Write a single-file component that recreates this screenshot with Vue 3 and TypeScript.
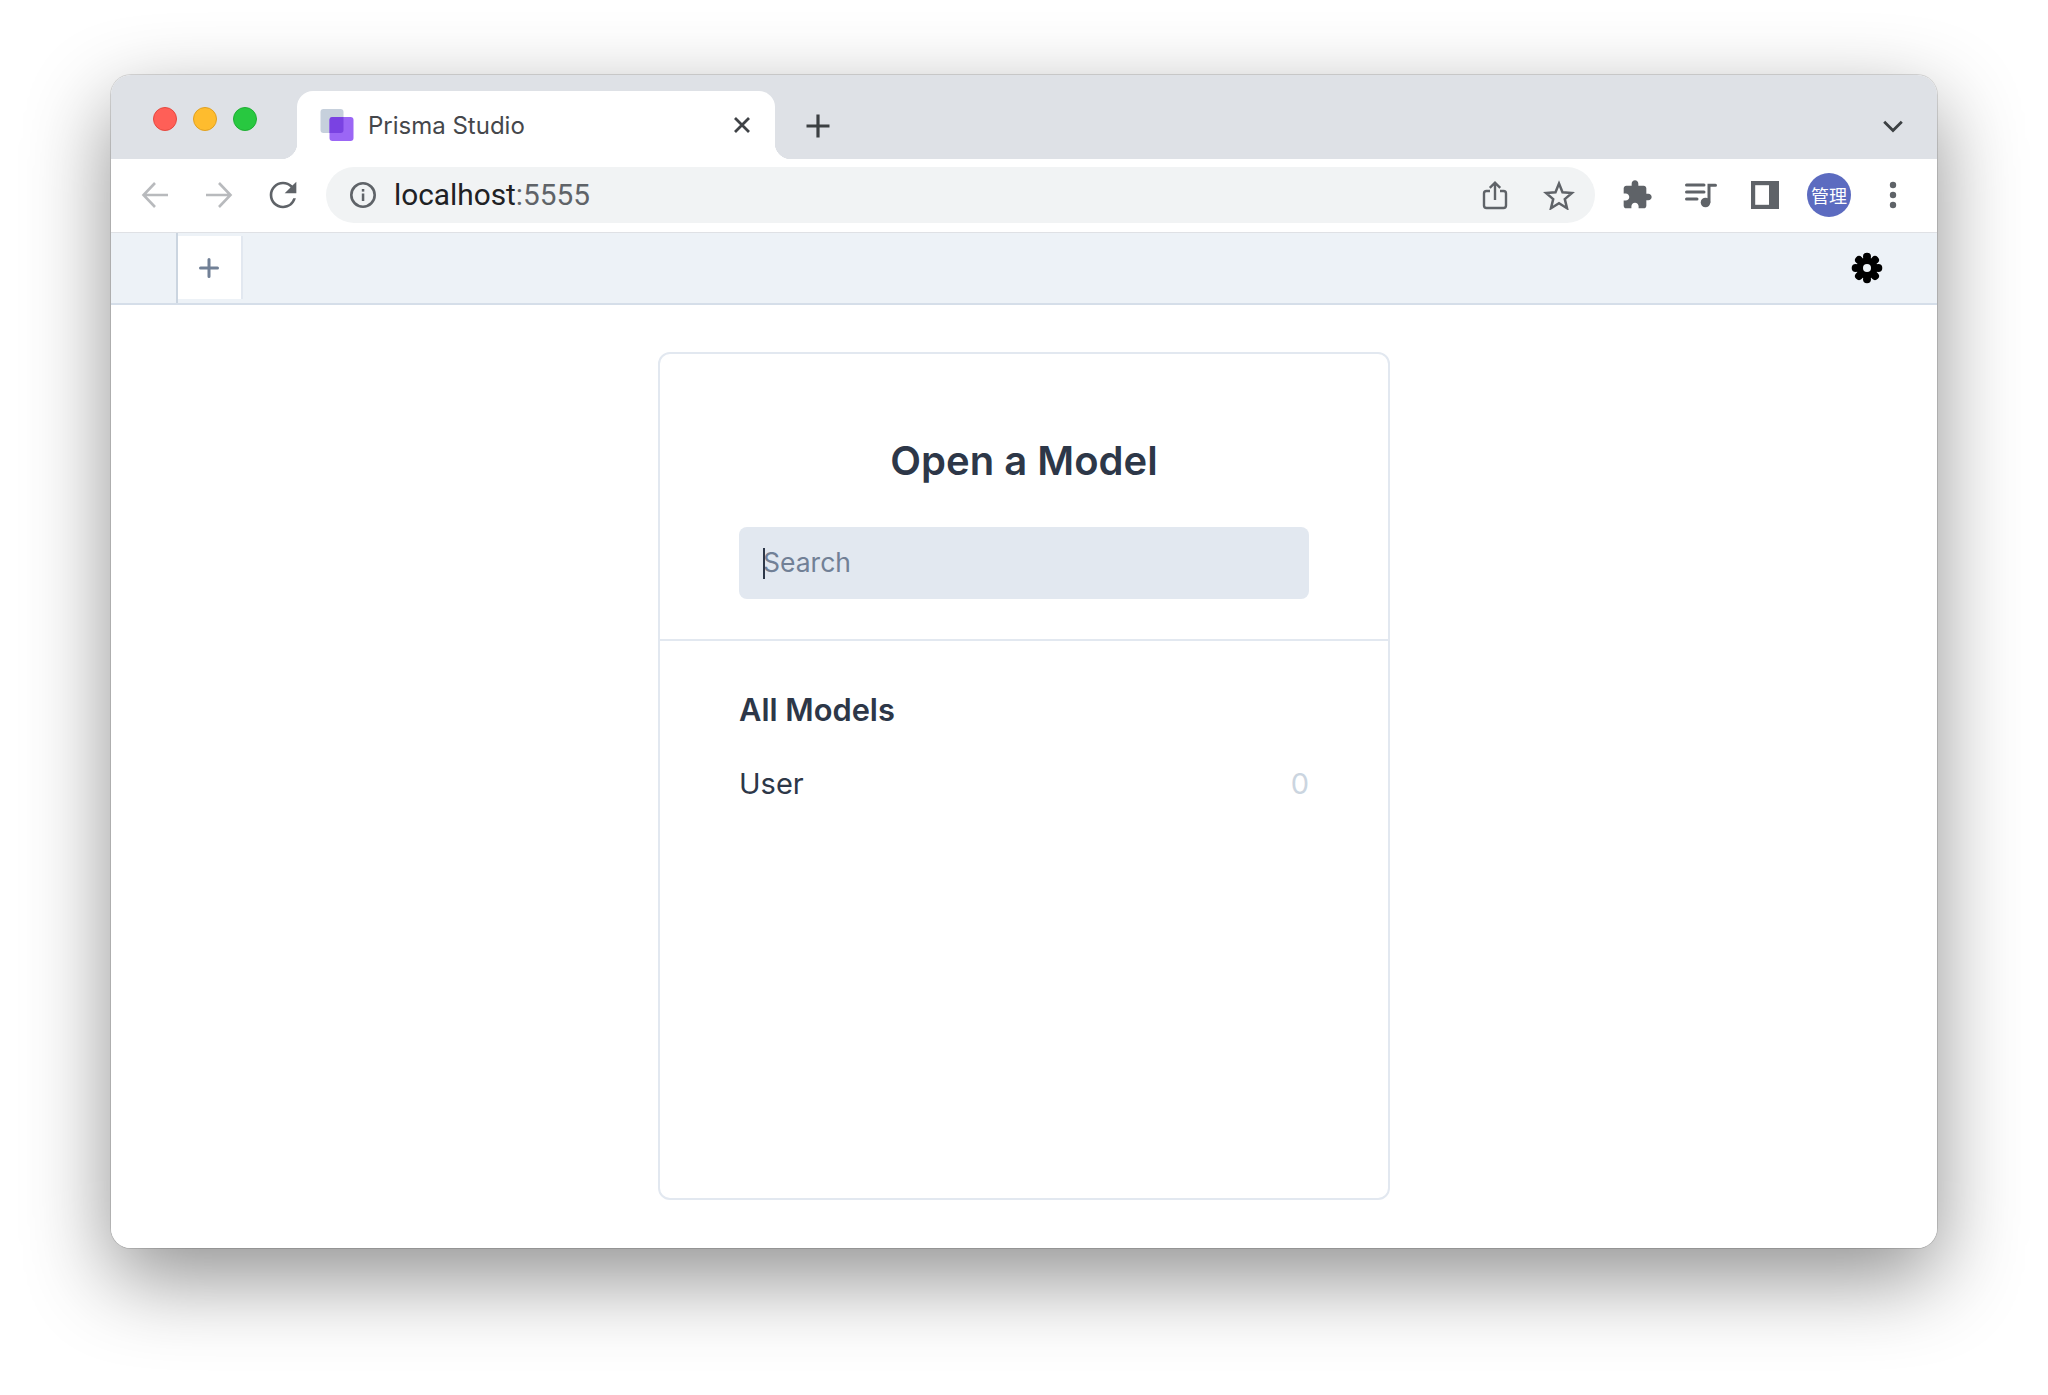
<script setup lang="ts">
const gearLobes: number[] = [0, 45, 90, 135, 180, 225, 270, 315]
const models = [{ name: 'User', count: 0 }]
</script>

<template>
  <div class="stage">
    <div class="window">
      <header class="strip">
        <div class="lights">
          <span class="light red"></span>
          <span class="light yellow"></span>
          <span class="light green"></span>
        </div>
        <div class="tab">
          <svg class="favicon" width="34" height="34" viewBox="0 0 34 34">
            <rect x="0.5" y="0" width="23" height="24" rx="3" fill="#c6d0dc" />
            <rect x="9.5" y="8" width="24" height="24" rx="3" fill="#9b66f5" />
            <path d="M9.500 11a3 3 0 0 1 3-3h11v13a3 3 0 0 1-3 3h-11z" fill="#7a42e2" />
          </svg>
          <span class="tab-title">Prisma Studio</span>
          <svg class="tab-close" width="18" height="18" viewBox="0 0 18 18">
            <path d="M2 2 16 16M16 2 2 16" stroke="#3f4246" stroke-width="2.800" fill="none" />
          </svg>
        </div>
        <svg class="strip-plus" width="24" height="24" viewBox="0 0 24 24">
          <path d="M12 0.5V23.5M0.5 12H23.5" stroke="#3c4043" stroke-width="3.200" fill="none" />
        </svg>
        <svg class="strip-chevron" width="20" height="13" viewBox="0 0 20 13">
          <path d="M1.200 1.800 10 10.600 18.800 1.800" stroke="#3c4043" stroke-width="2.800" fill="none" />
        </svg>
      </header>

      <nav class="toolbar">
        <span class="tool">
          <svg width="28" height="28" viewBox="0 0 28 28"><path d="M27 14H3M14 2 2.500 14 14 26" stroke="#b8babd" stroke-width="2.600" fill="none" /></svg>
        </span>
        <span class="tool">
          <svg width="28" height="28" viewBox="0 0 28 28"><path d="M1 14H25M14 2 25.500 14 14 26" stroke="#b8babd" stroke-width="2.600" fill="none" /></svg>
        </span>
        <span class="tool">
          <svg width="40" height="40" viewBox="0 0 24 24"><path fill="#5f6368" d="M17.650 6.350A7.958 7.958 0 0 0 12 4c-4.420 0-7.990 3.580-7.990 8s3.570 8 7.990 8c3.730 0 6.840-2.550 7.730-6h-1.600A6.400 6.400 0 0 1 12 18.400c-3.530 0-6.400-2.870-6.400-6.400S8.470 5.600 12 5.600c1.770 0 3.360.74 4.520 1.880L13 11h7V4l-2.350 2.350z" /></svg>
        </span>
        <div class="omnibox">
          <svg class="info" width="28" height="28" viewBox="0 0 28 28">
            <circle cx="14" cy="14" r="11.700" stroke="#5f6368" stroke-width="2.600" fill="none" />
            <rect x="12.800" y="12.500" width="2.500" height="7.500" fill="#5f6368" />
            <rect x="12.800" y="8" width="2.500" height="2.600" fill="#5f6368" />
          </svg>
          <span class="url"><span class="host">localhost</span><span class="port">:5555</span></span>
          <span class="omni-actions">
            <span class="tool">
              <svg width="26" height="30" viewBox="0 0 26 30">
                <path d="M8 11H4.500A2.500 2.500 0 0 0 2 13.500V25.500A2.500 2.500 0 0 0 4.500 28H21.500A2.500 2.500 0 0 0 24 25.500V13.500A2.500 2.500 0 0 0 21.500 11H18" stroke="#5f6368" stroke-width="2.400" fill="none" />
                <path d="M13 20V3M7.800 7.800 13 2.600 18.200 7.800" stroke="#5f6368" stroke-width="2.400" fill="none" />
              </svg>
            </span>
            <span class="tool">
              <svg width="32" height="30" viewBox="0 0 32 30">
                <path d="M16 3.500 19.500 12.200 29 13 21.800 19.100 24 28.200 16 23.300 8 28.200 10.200 19.100 3 13 12.500 12.200Z" stroke="#5f6368" stroke-width="2.500" fill="none" stroke-linejoin="miter" />
              </svg>
            </span>
          </span>
        </div>
        <div class="extras">
          <span class="tool">
            <svg width="32" height="32" viewBox="0 0 24 24"><path fill="#5f6368" d="M20.500 11H19V7c0-1.100-.9-2-2-2h-4V3.500C13 2.120 11.880 1 10.500 1S8 2.120 8 3.500V5H4c-1.100 0-1.990.9-1.990 2v3.800H3.500c1.490 0 2.700 1.210 2.700 2.700s-1.210 2.700-2.700 2.700H2V20c0 1.100.9 2 2 2h3.800v-1.500c0-1.490 1.210-2.700 2.700-2.700 1.490 0 2.700 1.210 2.700 2.700V22H17c1.100 0 2-.9 2-2v-4h1.500c1.380 0 2.500-1.120 2.500-2.500S21.880 11 20.500 11z" /></svg>
          </span>
          <span class="tool">
            <svg width="32" height="26" viewBox="0 0 32 26">
              <path d="M1.500 3H19M1.500 10H19M1.500 17H12" stroke="#5f6368" stroke-width="3" stroke-linecap="round" fill="none" />
              <path d="M24 20V3.200H30.500" stroke="#5f6368" stroke-width="3" stroke-linecap="round" fill="none" />
              <circle cx="20.500" cy="20.500" r="4.800" fill="#5f6368" />
            </svg>
          </span>
          <span class="tool">
            <svg width="28" height="28" viewBox="0 0 28 28">
              <rect width="28" height="28" fill="#5f6368" />
              <rect x="4.200" y="4.200" width="13.800" height="19.600" fill="#ffffff" />
            </svg>
          </span>
          <span class="tool">
            <span class="avatar">管理</span>
          </span>
          <span class="tool">
            <svg width="8" height="28" viewBox="0 0 8 28">
              <circle cx="4" cy="4" r="3.200" fill="#5f6368" />
              <circle cx="4" cy="14" r="3.200" fill="#5f6368" />
              <circle cx="4" cy="24" r="3.200" fill="#5f6368" />
            </svg>
          </span>
        </div>
      </nav>

      <div class="appbar">
        <div class="newtab">
          <button class="newtab-btn" type="button">
            <svg width="20" height="20" viewBox="0 0 20 20">
              <path d="M10 1.500V18.500M1.500 10H18.500" stroke="#718096" stroke-width="3" stroke-linecap="round" fill="none" />
            </svg>
          </button>
        </div>
        <svg class="gear" width="32" height="32" viewBox="0 0 32 32">
          <circle cx="16" cy="16" r="10.500" fill="#000" />
          <circle
            v-for="angle in gearLobes"
            :key="angle"
            cx="16"
            cy="4.700"
            r="4"
            fill="#000"
            :transform="`rotate(${angle} 16 16)`"
          />
          <circle cx="16" cy="16" r="4" fill="#edf2f7" />
        </svg>
      </div>

      <main class="main">
        <section class="card">
          <div class="card-head">
            <h1 class="title">Open a Model</h1>
            <div class="search">
              <span class="caret"></span>
              <input class="search-input" type="text" placeholder="Search" />
            </div>
          </div>
          <div class="card-body">
            <h2 class="subtitle">All Models</h2>
            <div v-for="model in models" :key="model.name" class="row">
              <span class="row-name">{{ model.name }}</span>
              <span class="row-count">{{ model.count }}</span>
            </div>
          </div>
        </section>
      </main>
    </div>
  </div>
</template>

<style scoped>
.stage {
  box-sizing: border-box;
  width: 2048px;
  height: 1395px;
  padding: 75px 111px 147px;
  background: #ffffff;
  overflow: hidden;
}
.window {
  display: flex;
  flex-direction: column;
  height: 100%;
  border-radius: 20px;
  overflow: hidden;
  background: #ffffff;
  box-shadow: 0 0 0 1px rgba(0, 0, 0, 0.13), 0 30px 84px rgba(0, 0, 0, 0.44);
  font-family: Inter, "Noto Sans", sans-serif;
}
.strip {
  display: flex;
  align-items: center;
  height: 84px;
  flex: none;
  background: #dee1e6;
}
.lights {
  display: flex;
  gap: 16px;
  width: 186px;
  padding-left: 42px;
  box-sizing: border-box;
  margin-top: 3px;
}
.light {
  width: 24px;
  height: 24px;
  border-radius: 50%;
  box-sizing: border-box;
}
.red { background: #ff5f57; border: 1px solid #e5483f; }
.yellow { background: #febc2e; border: 1px solid #e0a020; }
.green { background: #28c840; border: 1px solid #1fae33; }
.tab {
  position: relative;
  display: flex;
  align-items: center;
  align-self: flex-end;
  box-sizing: border-box;
  width: 478px;
  height: 68px;
  padding: 0 24px 0 23px;
  background: #ffffff;
  border-radius: 16px 16px 0 0;
}
.tab::before,
.tab::after {
  content: "";
  position: absolute;
  bottom: 0;
  width: 16px;
  height: 16px;
}
.tab::before {
  left: -16px;
  background: radial-gradient(circle at 0 0, transparent 16px, #ffffff 16.500px);
}
.tab::after {
  right: -16px;
  background: radial-gradient(circle at 100% 0, transparent 16px, #ffffff 16.500px);
}
.favicon {
  flex: none;
  margin-top: 2px;
}
.tab-title {
  flex: 1;
  margin-left: 14px;
  font-size: 24px;
  color: #45474b;
  white-space: nowrap;
}
.tab-close {
  flex: none;
}
.strip-plus {
  flex: none;
  margin: 18px 0 0 31px;
}
.strip-chevron {
  flex: none;
  margin: 18px 34px 0 auto;
}
.toolbar {
  display: flex;
  align-items: center;
  flex: none;
  box-sizing: border-box;
  height: 74px;
  padding: 0 12px 2px;
  background: #ffffff;
  border-bottom: 1px solid #dfe1e5;
}
.tool {
  display: flex;
  align-items: center;
  justify-content: center;
  flex: none;
  width: 64px;
  height: 56px;
}
.omnibox {
  display: flex;
  align-items: center;
  flex: 1;
  min-width: 0;
  height: 56px;
  margin-left: 11px;
  padding: 0 4px 0 22px;
  border-radius: 28px;
  background: #f1f3f4;
}
.info {
  flex: none;
  margin-right: -1px;
  margin-left: 1px;
}
.url {
  margin-left: 18px;
  font-family: Roboto, sans-serif;
  font-size: 29.800px;
  white-space: nowrap;
}
.host {
  color: #202124;
}
.port {
  color: #5f6368;
}
.omni-actions {
  display: flex;
  margin-left: auto;
}
.extras {
  display: flex;
  margin-left: 10px;
}
.avatar {
  display: flex;
  align-items: center;
  justify-content: center;
  width: 44px;
  height: 44px;
  border-radius: 50%;
  background: #5c6bc0;
  color: #ffffff;
  font-family: "Noto Sans CJK SC", sans-serif;
  font-size: 18px;
  white-space: nowrap;
}
.appbar {
  display: flex;
  justify-content: space-between;
  align-items: center;
  flex: none;
  box-sizing: border-box;
  height: 72px;
  padding-left: 65px;
  padding-right: 54px;
  background: #edf2f7;
  border-bottom: 2px solid #d5dee9;
}
.newtab {
  align-self: stretch;
  box-sizing: border-box;
  width: 67px;
  padding: 3px 0 4px;
  border-left: 2px solid #cbd5e0;
}
.newtab-btn {
  display: flex;
  align-items: center;
  justify-content: center;
  width: 100%;
  height: 100%;
  padding: 0 2px 0 0;
  border: none;
  border-right: 2px solid #e2e8f0;
  background: #ffffff;
}
.gear {
  flex: none;
}
.main {
  display: flex;
  justify-content: center;
  flex: 1;
  min-height: 0;
  padding: 47px 0 48px;
  background: #ffffff;
}
.card {
  display: flex;
  flex-direction: column;
  box-sizing: border-box;
  width: 732px;
  border: 2px solid #e2e8f0;
  border-radius: 12px;
}
.card-head {
  padding: 80px 79px 40px;
  border-bottom: 2px solid #e2e8f0;
}
.title {
  margin: 0 0 39px;
  font-size: 40px;
  line-height: 54px;
  font-weight: 600;
  text-align: center;
  color: #2d3748;
}
.search {
  position: relative;
  height: 72px;
}
.caret {
  position: absolute;
  left: 24px;
  top: 21px;
  width: 2px;
  height: 31px;
  background: #2d3748;
}
.search-input {
  display: block;
  box-sizing: border-box;
  width: 100%;
  height: 100%;
  padding: 0 24px 2px;
  border: none;
  outline: none;
  border-radius: 8px;
  background: #e2e8f0;
  font-family: Inter, sans-serif;
  font-size: 26.500px;
  color: #2d3748;
}
.search-input::placeholder {
  color: #718096;
  opacity: 1;
}
.card-body {
  padding: 51px 79px 0;
}
.subtitle {
  margin: 0;
  font-size: 30.800px;
  line-height: 36px;
  font-weight: 600;
  color: #2d3748;
}
.row {
  display: flex;
  justify-content: space-between;
  align-items: center;
  height: 40px;
  margin-top: 35px;
  font-size: 29px;
}
.row-name {
  color: #2d3748;
}
.row-count {
  color: #cbd5e0;
}
</style>

<style>
html,
body {
  margin: 0;
  background: #ffffff;
}
</style>
